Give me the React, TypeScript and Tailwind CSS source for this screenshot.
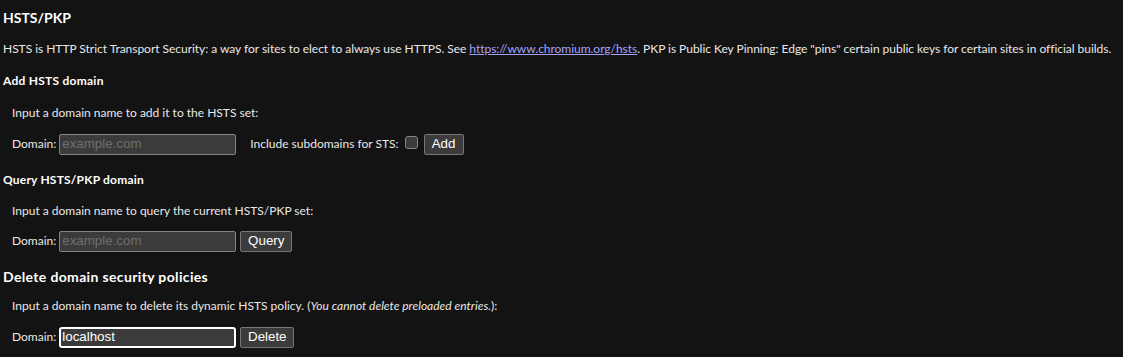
import React from "react";

const font = { fontFamily: 'Lato, "Noto Sans", sans-serif' };

function Input({ value, focused }: { value?: string; focused?: boolean }) {
  return (
    <div
      className={
        "w-[177px] h-[21px] flex items-center bg-[#3b3b3b] " +
        (focused ? "border-2 border-white rounded-[3px] px-[1px]" : "border border-[#858585] rounded-[2px] px-[2px]")
      }
      style={{ fontFamily: '"Liberation Sans", Arial, sans-serif' }}
    >
      {value ? (
        <span className="text-[13.33px] text-white">{value}</span>
      ) : (
        <span className="text-[13.33px] text-[#6f6f6f]">example.com</span>
      )}
    </div>
  );
}

function Btn({ label, w }: { label: string; w: string }) {
  return (
    <div
      className={"h-[21px] flex items-center justify-center bg-[#3b3b3b] border border-[#767676] rounded-[2px] text-[13.33px] text-white " + w}
      style={{ fontFamily: '"Liberation Sans", Arial, sans-serif' }}
    >
      {label}
    </div>
  );
}

export default function App() {
  return (
    <div className="w-[1123px] h-[357px] bg-[#131313] text-[#e8e8e8] text-[12px] overflow-hidden" style={font}>
      <div className="h-[34px] flex items-center pl-[3px] text-[14px] font-bold text-white">HSTS/PKP</div>
      <div className="h-[30px] flex items-center pl-[3px] whitespace-nowrap tracking-[-0.03px]">
        HSTS is HTTP Strict Transport Security: a way for sites to elect to always use HTTPS. See&nbsp;
        <a className="text-[#a3a3ff] underline">https://www.chromium.org/hsts</a>. PKP is Public Key Pinning: Edge "pins"
        certain public keys for certain sites in official builds.
      </div>
      <div className="h-[34px] flex items-center pl-[3px] font-bold text-white tracking-[0.25px]">Add HSTS domain</div>
      <div className="h-[30px] flex items-center pl-[12px]">Input a domain name to add it to the HSTS set:</div>
      <div className="h-[32px] flex items-center pl-[12px]">
        <span className="mr-[3px]">Domain:</span>
        <Input />
        <span className="ml-[14px] mr-[6px]">Include subdomains for STS:</span>
        <div className="w-[13px] h-[13px] border border-[#858585] rounded-[3px] bg-[#3b3b3b] mb-[3px]" />
        <div className="ml-[6px]">
          <Btn label="Add" w="w-[40px]" />
        </div>
      </div>
      <div className="h-[40px] flex items-center pl-[3px] font-bold text-white tracking-[0.2px]">Query HSTS/PKP domain</div>
      <div className="h-[22px] flex items-center pl-[12px]">Input a domain name to query the current HSTS/PKP set:</div>
      <div className="h-[38px] flex items-center pl-[12px]">
        <span className="mr-[3px]">Domain:</span>
        <Input />
        <div className="ml-[4px]">
          <Btn label="Query" w="w-[52px]" />
        </div>
      </div>
      <div className="h-[32px] flex items-center pl-[3px] text-[14px] font-bold text-white tracking-[0.35px]">
        Delete domain security policies
      </div>
      <div className="h-[28px] flex items-center pl-[12px] whitespace-nowrap">
        Input a domain name to delete its dynamic HSTS policy. (<i>You cannot delete preloaded entries.</i>):
      </div>
      <div className="h-[34px] flex items-center pl-[12px]">
        <span className="mr-[3px]">Domain:</span>
        <Input value="localhost" focused />
        <div className="ml-[4px]">
          <Btn label="Delete" w="w-[54px]" />
        </div>
      </div>
    </div>
  );
}
